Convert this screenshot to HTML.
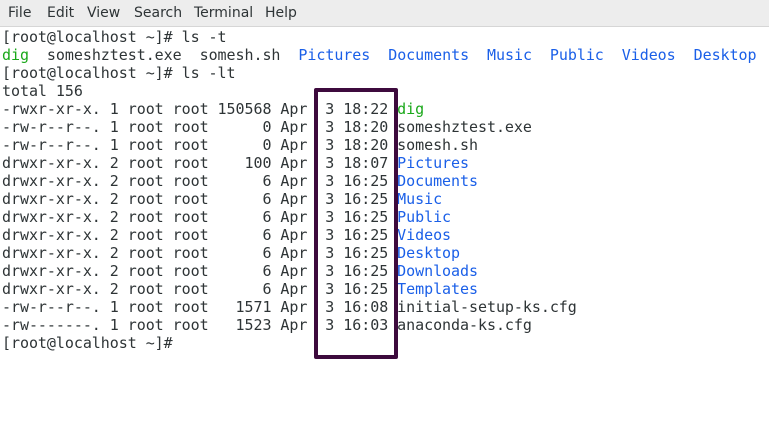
<!DOCTYPE html><html><head><style>
body{margin:0;width:769px;height:423px;background:#fff;overflow:hidden;position:relative}
.menu{height:26px;background:#ededed;border-bottom:1px solid #d6d6d6;font:14px "DejaVu Sans","Liberation Sans",sans-serif;color:#2e3436}
.menu span{position:absolute;top:5px}
pre{position:absolute;left:2px;top:28px;margin:0;font:15px/18px "DejaVu Sans Mono","Liberation Mono",monospace;letter-spacing:-0.05px;color:#2e3436}
.g{color:#1aa81a}.b{color:#1a5fe8}
.box{position:absolute;left:314px;top:88px;width:76px;height:263px;border:4px solid #3d0a3d;border-radius:2px}
</style></head><body>
<div class="menu"><span style="left:8px">File</span><span style="left:47px">Edit</span><span style="left:87px">View</span><span style="left:134px">Search</span><span style="left:194px">Terminal</span><span style="left:265px">Help</span></div>
<pre>[root@localhost ~]# ls -t
<span class="g">dig</span>  someshztest.exe  somesh.sh  <span class="b">Pictures</span>  <span class="b">Documents</span>  <span class="b">Music</span>  <span class="b">Public</span>  <span class="b">Videos</span>  <span class="b">Desktop</span>
[root@localhost ~]# ls -lt
total 156
-rwxr-xr-x. 1 root root 150568 Apr  3 18:22 <span class="g">dig</span>
-rw-r--r--. 1 root root      0 Apr  3 18:20 someshztest.exe
-rw-r--r--. 1 root root      0 Apr  3 18:20 somesh.sh
drwxr-xr-x. 2 root root    100 Apr  3 18:07 <span class="b">Pictures</span>
drwxr-xr-x. 2 root root      6 Apr  3 16:25 <span class="b">Documents</span>
drwxr-xr-x. 2 root root      6 Apr  3 16:25 <span class="b">Music</span>
drwxr-xr-x. 2 root root      6 Apr  3 16:25 <span class="b">Public</span>
drwxr-xr-x. 2 root root      6 Apr  3 16:25 <span class="b">Videos</span>
drwxr-xr-x. 2 root root      6 Apr  3 16:25 <span class="b">Desktop</span>
drwxr-xr-x. 2 root root      6 Apr  3 16:25 <span class="b">Downloads</span>
drwxr-xr-x. 2 root root      6 Apr  3 16:25 <span class="b">Templates</span>
-rw-r--r--. 1 root root   1571 Apr  3 16:08 initial-setup-ks.cfg
-rw-------. 1 root root   1523 Apr  3 16:03 anaconda-ks.cfg
[root@localhost ~]#</pre>
<div class="box"></div>
</body></html>
